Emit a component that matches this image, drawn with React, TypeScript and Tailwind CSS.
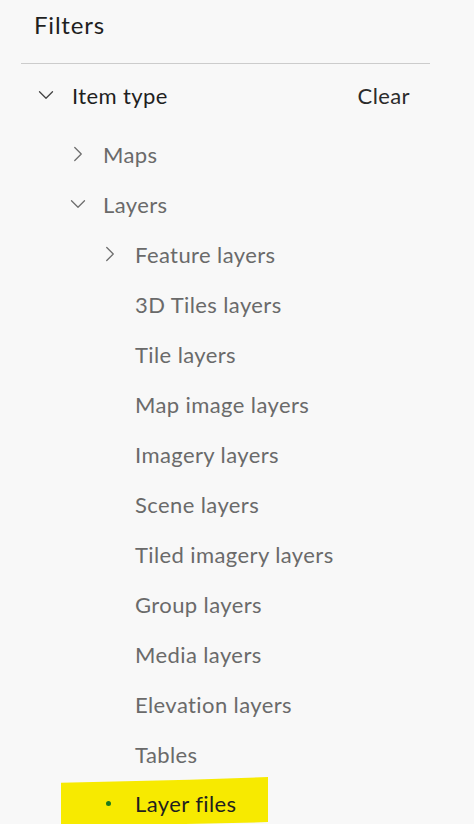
import { ChevronDown, ChevronRight } from 'lucide-react'

const layers = [
  { label: 'Feature layers', expandable: true },
  { label: '3D Tiles layers' },
  { label: 'Tile layers' },
  { label: 'Map image layers' },
  { label: 'Imagery layers' },
  { label: 'Scene layers' },
  { label: 'Tiled imagery layers' },
  { label: 'Group layers' },
  { label: 'Media layers' },
  { label: 'Elevation layers' },
  { label: 'Tables' },
]

function Row({
  indent,
  icon,
  children,
}: {
  indent: string
  icon?: 'right' | 'down'
  children: React.ReactNode
}) {
  return (
    <div className={`flex h-[50px] shrink-0 items-center ${indent}`}>
      <span className="mr-[12px] flex w-[26px] items-center text-[#6e6e6e]">
        {icon === 'right' && <ChevronRight className="h-[26px] w-[26px]" strokeWidth={1.2} />}
        {icon === 'down' && <ChevronDown className="h-[26px] w-[26px]" strokeWidth={1.2} />}
      </span>
      <span className="text-[22px] tracking-[0.4px] text-[#6a6a6a]">{children}</span>
    </div>
  )
}

export default function App() {
  return (
    <div className="h-[827px] w-[474px] overflow-hidden bg-white">
      <div
        className="flex h-[824px] w-[474px] flex-col bg-[#f8f8f8]"
        style={{ fontFamily: 'Lato, "Noto Sans", sans-serif' }}
      >
        <h1 className="shrink-0 pl-[34px] pt-[9px] text-[24px] leading-[32px] tracking-[0.8px] text-[#1f1f1f]">
          Filters
        </h1>
        <div className="mx-[21px] mt-[22px] w-[409px] shrink-0 border-t border-[#cccccc]" />

        <div className="mt-[5px] flex h-[52px] shrink-0 items-center pl-[33px] pr-[64px]">
          <span className="mr-[13px] flex w-[26px] items-center text-[#444]">
            <ChevronDown className="h-[26px] w-[26px]" strokeWidth={1.2} />
          </span>
          <span className="flex-1 text-[22px] tracking-[0.4px] text-[#1f1f1f]">Item type</span>
          <button className="text-[22px] tracking-[0.4px] text-[#2b2b2b]">Clear</button>
        </div>

        <div className="mt-[8px] flex shrink-0 flex-col">
          <Row indent="pl-[65px]" icon="right">Maps</Row>
          <Row indent="pl-[65px]" icon="down">Layers</Row>
          {layers.map((l) => (
            <Row key={l.label} indent="pl-[97px]" icon={l.expandable ? 'right' : undefined}>
              {l.label}
            </Row>
          ))}
          <div className="relative flex h-[45px] shrink-0 items-start pl-[97px] pt-[8px]">
            <div
              className="absolute left-[61px] top-[-2px] h-[47px] w-[207px] bg-[#f7ea00]"
              style={{ clipPath: 'polygon(0 12%, 62% 6%, 100% 0, 100% 96%, 60% 100%, 0 100%)' }}
            />
            <span className="relative mr-[12px] flex h-[33px] w-[26px] items-center">
              <span className="ml-[9px] h-[5px] w-[5px] rounded-full bg-[#1c7a1c]" />
            </span>
            <span className="relative text-[22px] tracking-[0.4px] text-[#1f1f1f]">Layer files</span>
          </div>
        </div>
      </div>
    </div>
  )
}
